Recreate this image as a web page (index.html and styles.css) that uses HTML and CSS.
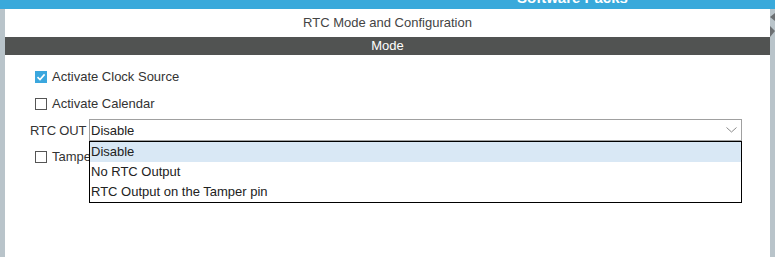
FILE: index.html
```html
<!DOCTYPE html>
<html>
<head>
<meta charset="utf-8">
<link rel="stylesheet" href="styles.css">
</head>
<body>
<div class="topbar"><span class="toptext">Software Packs</span></div>
<div class="main">
  <div class="leftstrip"></div>
  <div class="panel">
    <div class="title">RTC Mode and Configuration</div>
    <div class="modebar">Mode</div>
    <div class="content">
      <div class="row">
        <span class="cb checked"><svg width="12" height="12" viewBox="0 0 12 12"><path d="M2.5 6.2 L5 8.6 L9.6 3.4" fill="none" stroke="#fff" stroke-width="1.6"/></svg></span>
        <span class="label">Activate Clock Source</span>
      </div>
      <div class="row">
        <span class="cb"></span>
        <span class="label">Activate Calendar</span>
      </div>
      <div class="selrow">
        <span class="sellabel">RTC OUT</span>
        <div class="select">
          <span class="seltext">Disable</span>
          <svg class="chev" width="11" height="6" viewBox="0 0 11 6"><path d="M0.5 0.5 L5.5 5 L10.5 0.5" fill="none" stroke="#8a8a8a" stroke-width="1"/></svg>
          <div class="dropdown">
            <div class="opt sel">Disable</div>
            <div class="opt">No RTC Output</div>
            <div class="opt">RTC Output on the Tamper pin</div>
          </div>
        </div>
      </div>
      <div class="row">
        <span class="cb"></span>
        <span class="label">Tamper</span>
      </div>
    </div>
  </div>
  <div class="rightstrip">
    <svg width="5" height="30" viewBox="0 0 5 30"><path d="M5 3 L0 7 L5 11 Z" fill="#6b6f72"/><path d="M0 16 L5 21 L0 27 Z" fill="#6b6f72"/></svg>
  </div>
</div>
</body>
</html>
```
FILE: styles.css
```css
html, body {
  margin: 0;
  padding: 0;
}
body {
  width: 775px;
  height: 257px;
  overflow: hidden;
  background: #b9c4ca;
  font-family: "Liberation Sans", Arial, sans-serif;
  font-size: 13px;
  color: #333;
}
.topbar {
  height: 9px;
  background: #39a9db;
  overflow: hidden;
  padding-left: 517px;
}
.toptext {
  display: block;
  margin-top: -10px;
  line-height: 16px;
  font-weight: bold;
  font-size: 15px;
  color: #fff;
}
.main {
  display: flex;
  height: 248px;
}
.leftstrip {
  width: 5px;
  background: #b9c4ca;
}
.panel {
  flex: 1;
  background: #fff;
}
.rightstrip {
  width: 5px;
  background: #b9c4ca;
  padding-top: 1px;
}
.rightstrip svg {
  display: block;
}
.title {
  height: 28px;
  line-height: 28px;
  text-align: center;
  color: #444;
  font-size: 13px;
}
.modebar {
  height: 18px;
  line-height: 18px;
  background: #515352;
  color: #fff;
  text-align: center;
  font-size: 13px;
}
.content {
  padding-top: 8px;
}
.row {
  height: 27px;
  display: flex;
  align-items: center;
  padding-left: 30px;
}
.cb {
  width: 12px;
  height: 12px;
  box-sizing: border-box;
  border: 1px solid #555;
  background: #fff;
  margin-right: 5px;
  display: flex;
}
.cb.checked {
  border: none;
  background: #3ba7de;
}
.cb svg {
  display: block;
}
.label {
  color: #333;
}
.selrow {
  height: 26px;
  display: flex;
  align-items: center;
  padding-left: 25px;
}
.sellabel {
  width: 59px;
  color: #333;
  letter-spacing: -0.2px;
}
.select {
  position: relative;
  width: 653px;
  height: 22px;
  box-sizing: border-box;
  border: 1px solid #a0a0a0;
  display: flex;
  align-items: center;
  padding-left: 1px;
}
.seltext {
  flex: 1;
  color: #222;
}
.chev {
  margin-right: 4px;
  margin-top: -1px;
}
.dropdown {
  position: absolute;
  top: 21px;
  left: -1px;
  width: 653px;
  box-sizing: border-box;
  border: 1px solid #000;
  background: #fff;
  z-index: 2;
}
.opt {
  height: 20px;
  line-height: 20px;
  padding-left: 1px;
  color: #222;
}
.opt.sel {
  background: #d9e8f5;
}
```
